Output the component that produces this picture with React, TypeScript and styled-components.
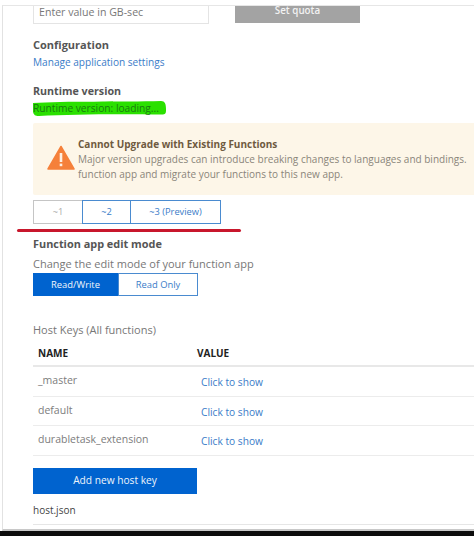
import React from "react";
import styled, { createGlobalStyle } from "styled-components";

const Global = createGlobalStyle`
  html, body { margin: 0; padding: 0; background: #fff; }
  body { font-family: "Open Sans", "Noto Sans", sans-serif; width: 474px; height: 536px; overflow: hidden; }
  * { box-sizing: border-box; }
`;

const Page = styled.div`
  width: 474px; height: 536px; overflow: hidden; display: flex; flex-direction: column; background: #fff;
`;
const Frame = styled.div`
  position: relative;
  flex: 1; min-height: 0; overflow: hidden; margin-left: 2px; margin-top: 5px;
  border-left: 1px solid #e2e2e2; border-top: 1px solid #e6e6e6; border-bottom: 2px solid #c8c8c8;
  padding: 0 0 0 30px;
`;
const Taskbar = styled.div`
  height: 5px; background: #0c0c0c; flex-shrink: 0;
`;
const QuotaRow = styled.div`
  display: flex; gap: 26px; height: 17px; align-items: stretch;
`;
const QuotaInput = styled.div`
  width: 176px; border: 1px solid #e4e4e4; border-top: 0; color: #777; font-size: 10.6px; line-height: 12px; padding: 0 0 0 5px; height: 18px;
`;
const QuotaButton = styled.div`
  width: 125px; height: 17px; background: #a3a3a3; color: #f2f2f2; font-size: 9.8px; font-weight: 600; text-align: center; line-height: 9px;
`;
const SectionTitle = styled.div<{ $top: number; $size: number }>`
  margin-top: ${p => p.$top}px; font-size: ${p => p.$size}px; line-height: 16px; font-weight: 700; color: #555;
`;
const LinkLine = styled.a`
  display: block; margin-top: 1px; font-size: 10.1px; line-height: 16px; color: #3a7cc8;
`;
const Highlighted = styled.div`
  position: relative; width: 135px; margin-top: 1px; height: 16px; font-size: 10.2px; line-height: 16px; color: #187a10; white-space: nowrap;
  span { position: relative; }
`;
const Marker = styled.svg`
  position: absolute; left: 0; top: 1px;
`;
const Banner = styled.div`
  display: flex; margin-top: 7px; width: 470px; height: 72px; background: #fdf6e8; border-radius: 2px; padding: 14px 0 0 14px; gap: 3px;
`;
const BannerIcon = styled.svg`
  flex-shrink: 0; margin-top: 8px;
`;
const BannerText = styled.div`
  font-size: 10px; line-height: 15px; color: #8a857a; white-space: nowrap;
  strong { display: block; font-weight: 700; color: #6f5a3f; }
`;
const VersionRow = styled.div`
  display: flex; margin-top: 5px; height: 24px;
`;
const VersionBtn = styled.div<{ $w: number; $off?: boolean }>`
  width: ${p => p.$w}px; font-size: 9.3px; line-height: 22px; text-align: center;
  border: 1px solid ${p => (p.$off ? "#c5c5c5" : "#4a8bd0")};
  color: ${p => (p.$off ? "#aaa" : "#3a7cc8")};
  margin-left: -1px;
  &:first-child { margin-left: 0; }
`;
const RedLine = styled.div`
  position: absolute; left: 14px; top: 223px; width: 224px; height: 3px; border-radius: 2px; background: #c8172c;
`;
const Hint = styled.div`
  margin-top: 4px; font-size: 11px; line-height: 16px; color: #777;
`;
const ModeRow = styled.div`
  display: flex; margin-top: 1px; height: 23px;
`;
const ModeBtn = styled.div<{ $on?: boolean }>`
  width: ${p => (p.$on ? 85 : 80)}px; font-size: 9.4px; line-height: 21px; text-align: center;
  border: 1px solid ${p => (p.$on ? "#0063cf" : "#4a8bd0")};
  background: ${p => (p.$on ? "#0063cf" : "#fff")};
  color: ${p => (p.$on ? "#f2f6fb" : "#3a7cc8")};
`;
const HostKeys = styled.div`
  margin-top: 26px; font-size: 11px; line-height: 16px; color: #777;
`;
const Table = styled.div`
  margin-top: 5px; width: 441px;
`;
const HeadRow = styled.div`
  display: flex; height: 24px; border-bottom: 2px solid #e8e8e8; font-size: 10px; font-weight: 700; line-height: 20px; color: #222; padding-left: 5px;
`;
const NameCol = styled.div`
  width: 159px; flex-shrink: 0;
`;
const BodyRow = styled.div`
  display: flex; height: 29.5px; border-bottom: 1px solid #ececec; padding-left: 5px; font-size: 10.5px; color: #7c7c7c; line-height: 26px;
`;
const ValueLink = styled.a`
  color: #3a7cc8; padding: 2px 0 0 4px; font-size: 10.2px; line-height: 26px;
`;
const AddButton = styled.div`
  margin-top: 12px; width: 164px; height: 26px; background: #0063cf; color: #eef4fb; font-size: 10.2px; line-height: 25px; text-align: center;
`;
const JsonLabel = styled.div`
  margin-top: 8px; font-size: 10px; line-height: 16px; color: #444;
`;
const JsonBox = styled.div`
  margin-top: 6px; width: 441px; height: 30px; border-top: 1px solid #e6e6e6;
`;

export default function App() {
  return (
    <Page>
      <Global />
      <Frame>
        <QuotaRow>
          <QuotaInput>Enter value in GB-sec</QuotaInput>
          <QuotaButton>Set quota</QuotaButton>
        </QuotaRow>
        <SectionTitle $top={14} $size={11}>Configuration</SectionTitle>
        <LinkLine>Manage application settings</LinkLine>
        <SectionTitle $top={13} $size={10.7}>Runtime version</SectionTitle>
        <Highlighted>
          <Marker width="136" height="18" viewBox="0 0 136 18">
            <path d="M0 2 C30 0 90 1 128 0 C132 0 133 3 133 8 C133 12 133 13 130 13.5 C90 13 40 13 6 15 C2 15 1 14 0 11 Z" fill="#2ae000" />
          </Marker>
          <span>Runtime version: loading...</span>
        </Highlighted>
        <Banner>
          <BannerIcon width="28" height="25" viewBox="0 0 28 25">
            <path d="M14 1.5 L27 24 H1 Z" fill="#f5803a" stroke="#f5803a" strokeWidth="1.5" strokeLinejoin="round" />
            <rect x="12.7" y="8" width="2.6" height="9" fill="#fdf0e4" />
            <rect x="12.7" y="18.6" width="2.6" height="2.6" fill="#fdf0e4" />
          </BannerIcon>
          <BannerText>
            <strong>Cannot Upgrade with Existing Functions</strong>
            Major version upgrades can introduce breaking changes to languages and bindings.
            <br />
            function app and migrate your functions to this new app.
          </BannerText>
        </Banner>
        <VersionRow>
          <VersionBtn $w={50} $off>~1</VersionBtn>
          <VersionBtn $w={49}>~2</VersionBtn>
          <VersionBtn $w={91}>~3 (Preview)</VersionBtn>
        </VersionRow>
        <RedLine />
        <SectionTitle $top={12} $size={10.9}>Function app edit mode</SectionTitle>
        <Hint>Change the edit mode of your function app</Hint>
        <ModeRow>
          <ModeBtn $on>Read/Write</ModeBtn>
          <ModeBtn>Read Only</ModeBtn>
        </ModeRow>
        <HostKeys>Host Keys (All functions)</HostKeys>
        <Table>
          <HeadRow>
            <NameCol>NAME</NameCol>
            <div>VALUE</div>
          </HeadRow>
          {["_master", "default", "durabletask_extension"].map(n => (
            <BodyRow key={n}>
              <NameCol>{n}</NameCol>
              <ValueLink>Click to show</ValueLink>
            </BodyRow>
          ))}
        </Table>
        <AddButton>Add new host key</AddButton>
        <JsonLabel>host.json</JsonLabel>
        <JsonBox />
      </Frame>
      <Taskbar />
    </Page>
  );
}
